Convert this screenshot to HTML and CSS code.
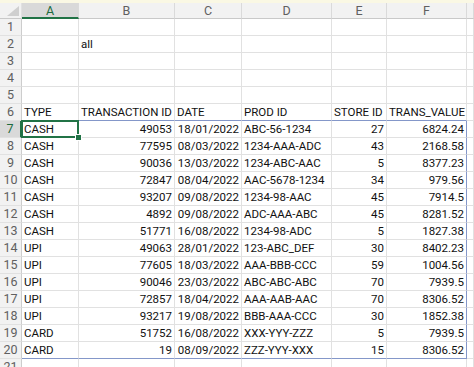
FILE: index.html
```html
<!DOCTYPE html>
<html lang="en">
<head>
    <meta charset="UTF-8">
    <meta name="viewport" content="width=device-width, initial-scale=1.0">
    <title>Transactions</title>
    <link rel="stylesheet" href="styles.css">
</head>
<body>
    <div class="band"></div>
    <div class="sheet">
        <div class="row head">
            <div class="corner"><span class="tri"></span></div>
            <div class="col on">A</div><div class="col">B</div><div class="col">C</div><div class="col">D</div><div class="col">E</div><div class="col">F</div><div class="col"></div>
        </div>
        <div class="row"><div class="num">1</div><div></div><div></div><div></div><div></div><div></div><div></div><div></div></div>
        <div class="row"><div class="num">2</div><div></div><div>all</div><div></div><div></div><div></div><div></div><div></div></div>
        <div class="row"><div class="num">3</div><div></div><div></div><div></div><div></div><div></div><div></div><div></div></div>
        <div class="row"><div class="num">4</div><div></div><div></div><div></div><div></div><div></div><div></div><div></div></div>
        <div class="row"><div class="num">5</div><div></div><div></div><div></div><div></div><div></div><div></div><div></div></div>
        <div class="row top"><div class="num">6</div><div>TYPE</div><div>TRANSACTION ID</div><div>DATE</div><div>PROD ID</div><div>STORE ID</div><div class="last">TRANS_VALUE</div><div></div></div>
        <div class="row data sel"><div class="num">7</div><div class="a">CASH</div><div class="r">49053</div><div class="r">18/01/2022</div><div>ABC-56-1234</div><div class="r">27</div><div class="r last">6824.24</div><div></div></div>
        <div class="row data"><div class="num">8</div><div>CASH</div><div class="r">77595</div><div class="r">08/03/2022</div><div>1234-AAA-ADC</div><div class="r">43</div><div class="r last">2168.58</div><div></div></div>
        <div class="row data"><div class="num">9</div><div>CASH</div><div class="r">90036</div><div class="r">13/03/2022</div><div>1234-ABC-AAC</div><div class="r">5</div><div class="r last">8377.23</div><div></div></div>
        <div class="row data"><div class="num">10</div><div>CASH</div><div class="r">72847</div><div class="r">08/04/2022</div><div>AAC-5678-1234</div><div class="r">34</div><div class="r last">979.56</div><div></div></div>
        <div class="row data"><div class="num">11</div><div>CASH</div><div class="r">93207</div><div class="r">09/08/2022</div><div>1234-98-AAC</div><div class="r">45</div><div class="r last">7914.5</div><div></div></div>
        <div class="row data"><div class="num">12</div><div>CASH</div><div class="r">4892</div><div class="r">09/08/2022</div><div>ADC-AAA-ABC</div><div class="r">45</div><div class="r last">8281.52</div><div></div></div>
        <div class="row data"><div class="num">13</div><div>CASH</div><div class="r">51771</div><div class="r">16/08/2022</div><div>1234-98-ADC</div><div class="r">5</div><div class="r last">1827.38</div><div></div></div>
        <div class="row data"><div class="num">14</div><div>UPI</div><div class="r">49063</div><div class="r">28/01/2022</div><div>123-ABC_DEF</div><div class="r">30</div><div class="r last">8402.23</div><div></div></div>
        <div class="row data"><div class="num">15</div><div>UPI</div><div class="r">77605</div><div class="r">18/03/2022</div><div>AAA-BBB-CCC</div><div class="r">59</div><div class="r last">1004.56</div><div></div></div>
        <div class="row data"><div class="num">16</div><div>UPI</div><div class="r">90046</div><div class="r">23/03/2022</div><div>ABC-ABC-ABC</div><div class="r">70</div><div class="r last">7939.5</div><div></div></div>
        <div class="row data"><div class="num">17</div><div>UPI</div><div class="r">72857</div><div class="r">18/04/2022</div><div>AAA-AAB-AAC</div><div class="r">70</div><div class="r last">8306.52</div><div></div></div>
        <div class="row data"><div class="num">18</div><div>UPI</div><div class="r">93217</div><div class="r">19/08/2022</div><div>BBB-AAA-CCC</div><div class="r">30</div><div class="r last">1852.38</div><div></div></div>
        <div class="row data"><div class="num">19</div><div>CARD</div><div class="r">51752</div><div class="r">16/08/2022</div><div>XXX-YYY-ZZZ</div><div class="r">5</div><div class="r last">7939.5</div><div></div></div>
        <div class="row data end"><div class="num">20</div><div>CARD</div><div class="r">19</div><div class="r">08/09/2022</div><div>ZZZ-YYY-XXX</div><div class="r">15</div><div class="r last">8306.52</div><div></div></div>
        <div class="row"><div class="num">21</div><div></div><div></div><div></div><div></div><div></div><div></div><div></div></div>
    </div>
</body>
</html>
```

FILE: styles.css
```css
body { margin: 0; overflow: hidden; background: #fff; font-family: Roboto, "Liberation Sans", sans-serif; font-size: 11.5px; color: #111; }
.band { height: 3px; background: #faf8e4; }
.sheet { display: grid; grid-template-columns: 22px 57px 96px 67px 90px 55px 80px 1fr; grid-template-rows: 16px; grid-auto-rows: 17px; }
.row { display: contents; }
.row > div { box-sizing: border-box; border-right: 1px solid #e1e1e1; border-bottom: 1px solid #e1e1e1; padding: 0 2px; line-height: 16px; white-space: nowrap; overflow: hidden; }
.row > .r { text-align: right; padding-right: 2px; padding-left: 0; }

.head > div { background: #f2f2f2; border-bottom-color: #c9c9c9; color: #606060; text-align: center; line-height: 15px; font-size: 12.5px; }
.head > .col { border-right-color: #dadada; }
.head > .on { background: #d9d9d9; color: #1d6b3f; border-bottom: 2px solid #217346; }
.corner { position: relative; }
.tri { position: absolute; right: 2px; bottom: 2px; width: 12px; height: 10px; background: #cfcfcf; clip-path: polygon(100% 0, 100% 100%, 0 100%); }

.row > .num { background: #f2f2f2; border-right-color: #cdcdcd; border-bottom-color: #e1e1e1; color: #606060; text-align: center; padding: 0; font-size: 12.5px; }
.sel > .num { background: #d9d9d9; color: #1d6b3f; border-right: 2px solid #217346; }

.top > div:not(.num):not(:last-child) { border-bottom-color: #8497c9; }
.data > .last { border-right-color: #8497c9; }
.end > div:not(.num):not(:last-child) { border-bottom-color: #8497c9; }

.a { position: relative; overflow: visible !important; }
.a::before { content: ""; position: absolute; left: -1px; top: -1px; right: -1px; bottom: -1px; border: 2px solid #217346; }
.a::after { content: ""; position: absolute; right: -4px; bottom: -4px; width: 5px; height: 5px; background: #217346; border: 1px solid #fff; z-index: 1; }
```
